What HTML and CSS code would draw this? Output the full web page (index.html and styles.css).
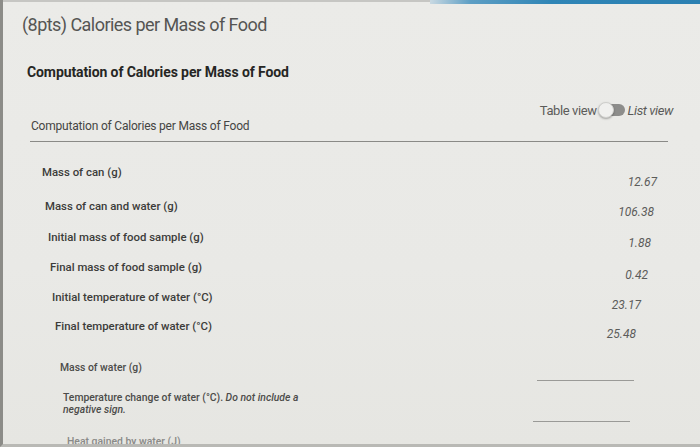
FILE: index.html
```html
<!DOCTYPE html>
<html lang="en">
<head>
<meta charset="utf-8">
<title>Calories per Mass of Food</title>
<link rel="stylesheet" href="styles.css">
</head>
<body>
<div class="screen">
  <div class="topbar"><span class="topbar-fill"></span><span class="topbar-blue"></span></div>
  <div class="content">
    <h1 class="title">(8pts) Calories per Mass of Food</h1>
    <h2 class="subtitle">Computation of Calories per Mass of Food</h2>
    <div class="viewbar">
      <span class="view-label">Table view</span>
      <span class="toggle"><span class="toggle-knob"></span></span>
      <span class="view-label active">List view</span>
    </div>
    <div class="section-head">Computation of Calories per Mass of Food</div>
    <div class="rows">
      <div class="row r1"><span class="label">Mass of can (g)</span><span class="value">12.67</span></div>
      <div class="row r2"><span class="label">Mass of can and water (g)</span><span class="value">106.38</span></div>
      <div class="row r3"><span class="label">Initial mass of food sample (g)</span><span class="value">1.88</span></div>
      <div class="row r4"><span class="label">Final mass of food sample (g)</span><span class="value">0.42</span></div>
      <div class="row r5"><span class="label">Initial temperature of water (°C)</span><span class="value">23.17</span></div>
      <div class="row r6"><span class="label">Final temperature of water (°C)</span><span class="value">25.48</span></div>
    </div>
    <div class="inputs">
      <div class="irow i1"><span class="ilabel">Mass of water (g)</span><span class="field"></span></div>
      <div class="irow i2"><span class="ilabel">Temperature change of water (°C). <em>Do not include a</em><br><em>negative sign.</em></span><span class="field"></span></div>
      <div class="irow i3"><span class="ilabel">Heat gained by water (J)</span></div>
    </div>
  </div>
</div>
</body>
</html>
```

FILE: styles.css
```css
html, body {
  margin: 0;
  padding: 0;
  background: #e8e8e5;
}
.screen {
  width: 700px;
  height: 447px;
  box-sizing: border-box;
  border-left: 3px solid #8c8c88;
  border-bottom: 3px solid #b9b9b5;
  background: linear-gradient(180deg, #ebebe8 0%, #e9e9e6 60%, #e6e6e2 100%);
  overflow: hidden;
  font-family: Roboto, "Noto Sans", sans-serif;
}
.topbar {
  display: flex;
  height: 4px;
}
.topbar-fill {
  flex: 1;
  border-top: 2px solid #c6c6c3;
}
.topbar-blue {
  width: 270px;
  background: linear-gradient(90deg, #c9d9e2 0%, #5d9ec4 15%, #2f85b6 45%, #2b80b2 100%);
}
.content {
  padding: 0 0 0 19px;
}
.title {
  margin: 9px 0 0 0;
  font-size: 18px;
  font-weight: 400;
  color: #555553;
  line-height: 24px;
  letter-spacing: -0.55px;
}
.subtitle {
  margin: 26px 0 0 5px;
  font-size: 14px;
  font-weight: 700;
  color: #262624;
  line-height: 18px;
  letter-spacing: -0.1px;
}
.viewbar {
  display: flex;
  justify-content: flex-end;
  align-items: center;
  gap: 2px;
  margin: 21px 27px 0 0;
  height: 16px;
}
.view-label {
  font-size: 13px;
  color: #5c5c5a;
  letter-spacing: -0.4px;
}
.view-label.active {
  font-style: italic;
  color: #5a5a58;
}
.toggle {
  position: relative;
  width: 24px;
  height: 12px;
  margin: 0 1px 0 2px;
  border-radius: 6px;
  background: #8d8d8b;
}
.toggle-knob {
  position: absolute;
  left: -3px;
  top: -2px;
  width: 16px;
  height: 16px;
  box-sizing: border-box;
  border-radius: 50%;
  border: 1px solid #cfcfcc;
  background: #f0f0ee;
  box-shadow: 0 1px 2px rgba(0,0,0,0.3);
}
.section-head {
  margin: 0 32px 0 8px;
  padding: 0 0 7px 1px;
  border-bottom: 1px solid #8a8a87;
  font-size: 12px;
  color: #454543;
  line-height: 16px;
  letter-spacing: -0.2px;
}
.rows {
  display: flex;
  flex-direction: column;
  margin-top: 23px;
}
.row {
  display: flex;
  justify-content: space-between;
  height: 30px;
}
.label {
  font-size: 11.4px;
  font-weight: 500;
  color: #3c3c3a;
  line-height: 14px;
}
.value {
  padding-top: 8px;
  font-size: 12px;
  font-style: italic;
  color: #5c5c5a;
  line-height: 14px;
}
.r1 { padding: 0 43px 0 20px; height: 34px; }
.r1 .value { padding-top: 10px; }
.r2 { padding: 0 46px 0 23px; height: 31px; }
.r2 .value { padding-top: 6px; }
.r3 { padding: 0 49px 0 26px; }
.r3 .value { padding-top: 6px; }
.r4 { padding: 0 52px 0 28px; }
.r5 { padding: 0 59px 0 30px; height: 29px; }
.r6 { padding: 0 64px 0 33px; }
.inputs {
  display: flex;
  flex-direction: column;
  margin-top: 13px;
}
.irow {
  display: flex;
  justify-content: space-between;
  align-items: flex-start;
}
.ilabel {
  width: 255px;
  font-size: 10.4px;
  font-weight: 500;
  color: #4c4c4a;
  line-height: 12px;
}
.ilabel em {
  font-weight: 500;
}
.field {
  width: 97px;
  height: 0;
  border-top: 1px solid #9a9a97;
}
.i1 { padding: 0 66px 0 38px; height: 30px; }
.i1 .field { margin-top: 18px; }
.i2 { padding: 0 70px 0 41px; height: 44px; }
.i2 .field { margin-top: 29px; }
.i3 { padding: 0 0 0 45px; }
.i3 .ilabel { color: #8a8a88; }
```
